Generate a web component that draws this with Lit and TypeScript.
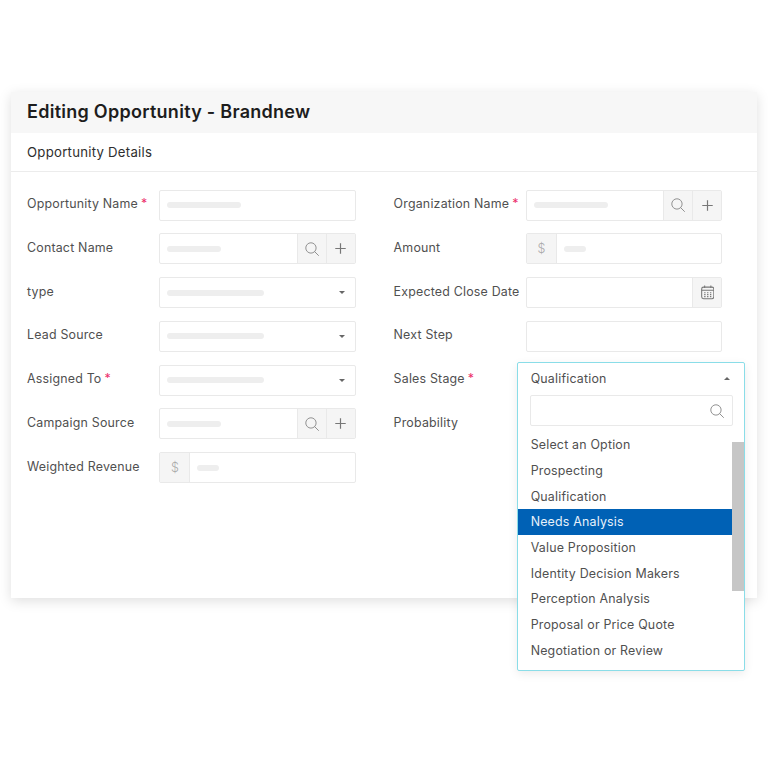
import { LitElement, html, css, svg } from "lit";
import { customElement } from "lit/decorators.js";

const searchIcon = svg`<svg class="ico s" viewBox="0 0 16 16" fill="none" stroke="#8c8c8c" stroke-width="1.1"><circle cx="6.8" cy="6.8" r="5.9"/><path d="M11 11 15.4 15.4" stroke-linecap="round"/></svg>`;
const plusIcon = svg`<svg class="ico p" viewBox="0 0 12 12" fill="none" stroke="#777" stroke-width="1.3"><path d="M6 .3v11.4M.3 6h11.4"/></svg>`;
const calIcon = svg`<svg class="ico c" viewBox="0 0 14 15" fill="none" stroke="#777" stroke-width="1.1"><rect x=".7" y="2.2" width="12.6" height="12" rx="2"/><path d="M.7 5.5h12.6M3.8.5v2.6M10.2.5v2.6"/><path d="M3.3 8h1.4M6.3 8h1.4M9.3 8h1.4M3.3 10h1.4M6.3 10h1.4M9.3 10h1.4M3.3 12h1.4M6.3 12h1.4M9.3 12h1.4" stroke-width="1.2"/></svg>`;

type Kind = "text" | "lookup" | "select" | "money" | "date" | "stage" | "none";
interface Field { label: string; req?: boolean; kind: Kind; bar?: number; }

const left: Field[] = [
  { label: "Opportunity Name", req: true, kind: "text", bar: 74 },
  { label: "Contact Name", kind: "lookup", bar: 54 },
  { label: "type", kind: "select", bar: 97 },
  { label: "Lead Source", kind: "select", bar: 97 },
  { label: "Assigned To", req: true, kind: "select", bar: 97 },
  { label: "Campaign Source", kind: "lookup", bar: 54 },
  { label: "Weighted Revenue", kind: "money", bar: 22 },
];
const right: Field[] = [
  { label: "Organization Name", req: true, kind: "lookup", bar: 74 },
  { label: "Amount", kind: "money", bar: 22 },
  { label: "Expected Close Date", kind: "date" },
  { label: "Next Step", kind: "text" },
  { label: "Sales Stage", req: true, kind: "stage" },
  { label: "Probability", kind: "none" },
];
const options = [
  "Select an Option", "Prospecting", "Qualification", "Needs Analysis", "Value Proposition",
  "Identity Decision Makers", "Perception Analysis", "Proposal or Price Quote", "Negotiation or Review",
];

@customElement("app-root")
export class AppRoot extends LitElement {
  static styles = css`
    :host {
      display: block;
      width: 768px;
      height: 768px;
      box-sizing: border-box;
      padding: 92px 11px 0;
      background: #fff;
      font-family: "Inter", "Liberation Sans", sans-serif;
      color: #505050;
    }
    .card {
      height: 506px;
      background: #fff;
      box-shadow: 0 3px 12px rgba(0, 0, 0, 0.13);
    }
    .head {
      height: 41px;
      background: #f7f7f7;
      display: flex;
      align-items: center;
      padding: 0 0 2px 16px;
      box-sizing: border-box;
      font-size: 18px;
      font-weight: 600;
      color: #1d1d1d;
      letter-spacing: 0.27px;
    }
    .sub {
      height: 38px;
      border-bottom: 1px solid #ececec;
      display: flex;
      align-items: center;
      padding-left: 16px;
      font-size: 13.2px;
      color: #2e2e2e;
      letter-spacing: 0.25px;
    }
    .form {
      display: grid;
      grid-template-columns: 329.4px 329px;
      column-gap: 37.2px;
      padding: 17.6px 0 0 16px;
    }
    .col {
      display: flex;
      flex-direction: column;
      gap: 12.75px;
    }
    .row {
      display: flex;
      align-items: center;
      height: 31px;
    }
    .label {
      width: 132.4px;
      flex: none;
      font-size: 12.4px;
      letter-spacing: 0.2px;
      white-space: nowrap;
      margin-top: -3px;
    }
    .req {
      color: #ec2f6b;
      margin-left: 3px;
    }
    .ctl {
      width: 196.4px;
      height: 31px;
      box-sizing: border-box;
      border: 1px solid #e9e9e9;
      border-radius: 2px;
      display: flex;
      align-items: center;
      background: #fff;
      position: relative;
    }
    .ctl.bare {
      border: none;
    }
    .main {
      flex: 1;
      display: flex;
      align-items: center;
      padding-left: 7px;
      min-width: 0;
      height: 100%;
    }
    .bar {
      height: 6px;
      border-radius: 3px;
      background: #eeeeee;
    }
    .add {
      flex: none;
      width: 29px;
      height: 100%;
      background: #f5f5f5;
      border-left: 1px solid #e9e9e9;
      box-sizing: border-box;
      display: flex;
      align-items: center;
      justify-content: center;
      font-size: 12.5px;
      font-weight: 300;
      color: #a9a9a9;
    }
    .add.first {
      border-left: none;
      border-right: 1px solid #e9e9e9;
      width: 30px;
    }
    .ico {
      display: block;
      flex: none;
    }
    .ico.s {
      width: 14px;
      height: 14px;
    }
    .ico.p {
      width: 11px;
      height: 11px;
    }
    .ico.c {
      width: 13.5px;
      height: 14.5px;
    }
    .caret {
      flex: none;
      width: 0;
      height: 0;
      border-left: 3.5px solid transparent;
      border-right: 3.5px solid transparent;
      border-top: 3.5px solid #666;
      margin-right: 10px;
    }
    .pop {
      position: absolute;
      left: -9px;
      top: -2.5px;
      width: 228.5px;
      height: 308.5px;
      box-sizing: border-box;
      border: 1.5px solid #8adde8;
      border-radius: 2px;
      background: #fff;
      box-shadow: 0 3px 10px rgba(0, 0, 0, 0.08);
      z-index: 2;
      display: flex;
      flex-direction: column;
    }
    .pop-head {
      flex: none;
      height: 32px;
      box-sizing: border-box;
      padding: 0 14px 2px 12.7px;
      display: flex;
      align-items: center;
      justify-content: space-between;
      font-size: 12.4px;
      letter-spacing: 0.2px;
    }
    .up {
      width: 0;
      height: 0;
      border-left: 3.5px solid transparent;
      border-right: 3.5px solid transparent;
      border-bottom: 3.5px solid #666;
    }
    .search {
      flex: none;
      height: 31px;
      margin: 0 11px 0 12px;
      box-sizing: border-box;
      border: 1px solid #e9e9e9;
      border-radius: 2px;
      display: flex;
      align-items: center;
      justify-content: flex-end;
      padding-right: 8px;
    }
    .list-wrap {
      flex: 1;
      position: relative;
      margin-top: 5.7px;
      min-height: 0;
    }
    .opt {
      height: 25.7px;
      margin-right: 12px;
      padding-left: 12.7px;
      display: flex;
      align-items: center;
      font-size: 12.4px;
      letter-spacing: 0.2px;
      white-space: nowrap;
    }
    .opt.sel {
      background: #0061b5;
      color: #e8f1fa;
    }
    .thumb {
      position: absolute;
      right: 0;
      top: 10.3px;
      width: 12px;
      height: 149px;
      background: #c6c6c6;
    }
  `;

  private control(f: Field) {
    const bar = f.bar ? html`<div class="bar" style="width:${f.bar}px"></div>` : "";
    switch (f.kind) {
      case "none":
        return "";
      case "lookup":
        return html`<div class="ctl"><div class="main">${bar}</div><div class="add">${searchIcon}</div><div class="add">${plusIcon}</div></div>`;
      case "select":
        return html`<div class="ctl"><div class="main">${bar}</div><div class="caret"></div></div>`;
      case "money":
        return html`<div class="ctl"><div class="add first">$</div><div class="main">${bar}</div></div>`;
      case "date":
        return html`<div class="ctl"><div class="main"></div><div class="add">${calIcon}</div></div>`;
      case "stage":
        return html`<div class="ctl bare">
          <div class="pop">
            <div class="pop-head"><span>Qualification</span><span class="up"></span></div>
            <div class="search">${searchIcon}</div>
            <div class="list-wrap">
              ${options.map((o) => html`<div class="opt ${o === "Needs Analysis" ? "sel" : ""}">${o}</div>`)}
              <div class="thumb"></div>
            </div>
          </div>
        </div>`;
      default:
        return html`<div class="ctl"><div class="main">${bar}</div></div>`;
    }
  }

  private column(fields: Field[]) {
    return html`<div class="col">
      ${fields.map(
        (f) => html`<div class="row">
          <div class="label">${f.label}${f.req ? html`<span class="req">*</span>` : ""}</div>
          ${this.control(f)}
        </div>`
      )}
    </div>`;
  }

  render() {
    return html`<div class="card">
      <div class="head">Editing Opportunity - Brandnew</div>
      <div class="sub">Opportunity Details</div>
      <div class="form">${this.column(left)}${this.column(right)}</div>
    </div>`;
  }
}
